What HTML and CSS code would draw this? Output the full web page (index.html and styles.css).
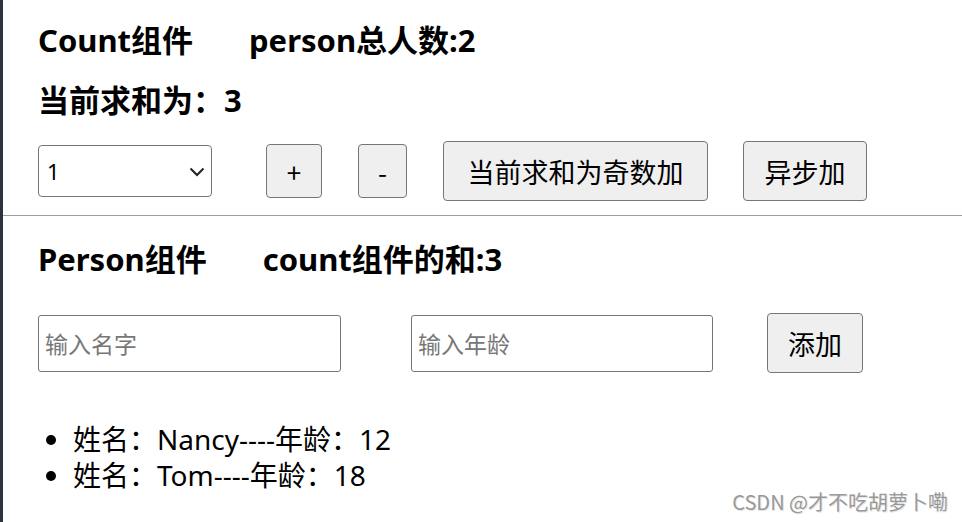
FILE: index.html
```html
<!DOCTYPE html>
<html lang="zh-CN">
<head>
  <meta charset="UTF-8" />
  <meta name="viewport" content="width=device-width, initial-scale=1.0"/>
  <title>Count / Person</title>
  <link rel="stylesheet" href="styles.css">
</head>
<body>
  <div class="page">
    <div class="count">
      <h2 class="title">Count组件<span class="gap"></span>person总人数:2</h2>
      <h2 class="sum">当前求和为：3</h2>
      <div class="controls">
        <div class="select-wrap">
          <select class="step">
            <option>1</option>
            <option>2</option>
            <option>3</option>
          </select>
          <svg class="chevron" width="16" height="10" viewBox="0 0 16 10">
            <path d="M1.5 1.5 L8 8 L14.5 1.5" fill="none" stroke="#222" stroke-width="2"/>
          </svg>
        </div>
        <button class="btn small plus">+</button>
        <button class="btn small minus">-</button>
        <button class="btn big odd">当前求和为奇数加</button>
        <button class="btn big async">异步加</button>
      </div>
    </div>

    <hr class="divider">

    <div class="person">
      <h2 class="title">Person组件<span class="gap"></span>count组件的和:3</h2>
      <div class="form">
        <input class="field name" type="text" placeholder="输入名字">
        <input class="field age" type="text" placeholder="输入年龄">
        <button class="btn big add">添加</button>
      </div>
      <ul class="people">
        <li>姓名：Nancy----年龄：12</li>
        <li>姓名：Tom----年龄：18</li>
      </ul>
    </div>
  </div>

  <div class="watermark">CSDN @才不吃胡萝卜嘞</div>
</body>
</html>
```

FILE: styles.css
```css
html, body {
  margin: 0;
  height: 100%;
}

body {
  background: #fff;
  color: #000;
  font-family: "Noto Sans", "Noto Sans CJK SC", sans-serif;
  border-left: 3px solid #2e343c;
  box-sizing: border-box;
  overflow: hidden;
}

.count,
.person {
  padding-left: 35px;
}

.count {
  padding-top: 20px;
}

h2 {
  margin: 0;
  font-size: 31px;
  font-weight: bold;
  line-height: 40px;
}

.title .gap {
  display: inline-block;
  width: 56px;
}

.sum {
  margin-top: 20px;
}

.controls {
  display: flex;
  align-items: center;
  margin-top: 21px;
}

.select-wrap {
  position: relative;
  margin-right: 54px;
}

.step {
  display: block;
  width: 174px;
  height: 52px;
  appearance: none;
  -webkit-appearance: none;
  font-family: inherit;
  font-size: 22px;
  padding: 0 8px;
  border: 1px solid #767676;
  border-radius: 4px;
  background: #fff;
  color: #000;
}

.chevron {
  position: absolute;
  right: 7px;
  top: 22px;
  pointer-events: none;
}

.btn {
  font-family: "Noto Sans CJK SC", sans-serif;
  background: #efefef;
  border: 1px solid #767676;
  border-radius: 4px;
  color: #000;
  padding: 0;
  cursor: pointer;
}

.btn.small {
  height: 54px;
  font-size: 26px;
  margin-right: 36px;
}

.plus {
  width: 56px;
}

.minus {
  width: 49px;
}

.btn.big {
  height: 60px;
  font-size: 27px;
}

.odd {
  width: 265px;
  margin-right: 35px;
}

.async {
  width: 124px;
}

.divider {
  border: none;
  border-top: 1px solid #a0a0a0;
  margin: 14px 0 0;
}

.person {
  padding-top: 23px;
}

.form {
  display: flex;
  align-items: center;
  margin-top: 34px;
}

.field {
  height: 57px;
  box-sizing: border-box;
  border: 1px solid #767676;
  border-radius: 3px;
  padding: 0 6px;
  font-family: "Noto Sans CJK SC", sans-serif;
  font-size: 23px;
}

.field::placeholder {
  color: #777;
}

.name {
  width: 303px;
  margin-right: 70px;
}

.age {
  width: 302px;
  margin-right: 54px;
}

.add {
  width: 96px;
}

.people {
  margin: 48px 0 0;
  padding-left: 35px;
  font-size: 28px;
  line-height: 36px;
}

.watermark {
  position: absolute;
  right: 14px;
  bottom: 6px;
  font-family: "Noto Sans CJK SC", sans-serif;
  font-size: 20px;
  color: #999;
  text-shadow: 1px 1px 0 #e6e6e6;
}
```
